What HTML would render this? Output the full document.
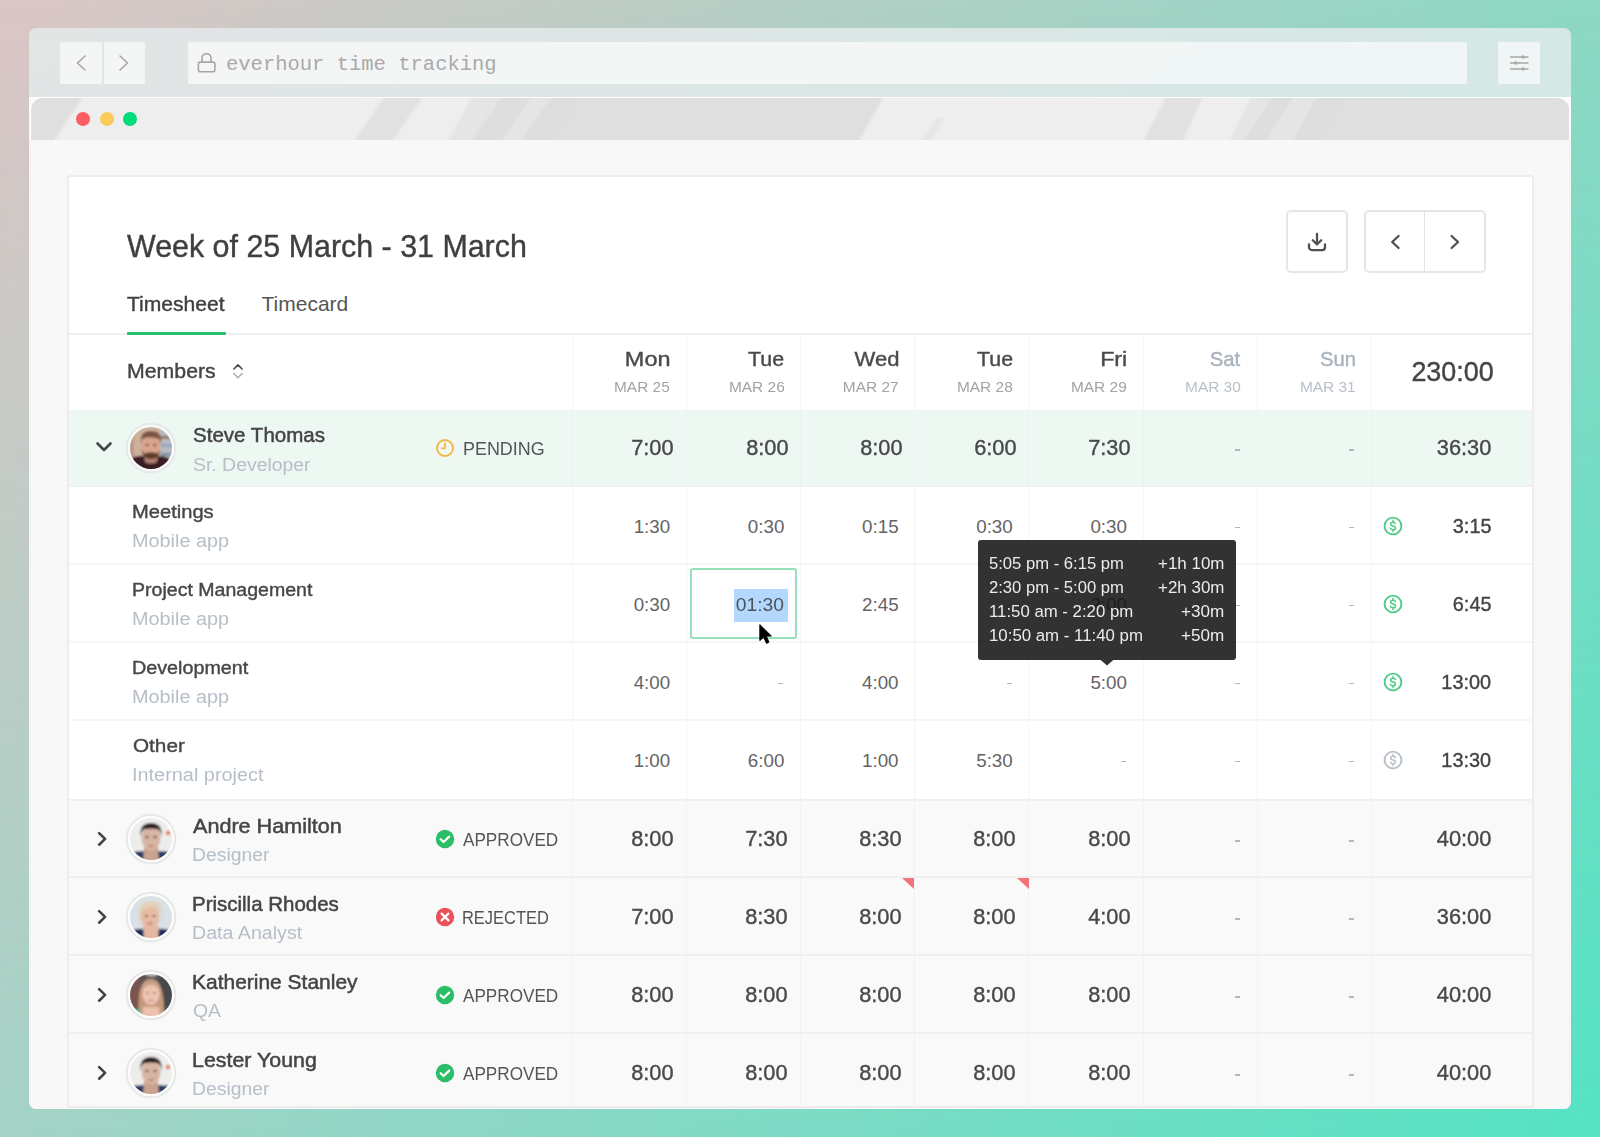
<!DOCTYPE html>
<html><head><meta charset="utf-8"><style>
html,body{margin:0;padding:0;}
body{width:1600px;height:1137px;position:relative;overflow:hidden;font-family:"Liberation Sans",sans-serif;
background:linear-gradient(to right,#dcc6c6,#8dd8c4);}
#bg2{position:absolute;left:0;top:0;width:1600px;height:1137px;background:linear-gradient(to right,#a4d2c6,#54e3c3);
-webkit-mask-image:linear-gradient(to bottom,transparent,#000);mask-image:linear-gradient(to bottom,transparent,#000);}
.t{position:absolute;line-height:1;white-space:nowrap;}
.abs{position:absolute;}
.md{-webkit-text-stroke:0.4px currentColor;}
.sb{-webkit-text-stroke:0.5px currentColor;}
#win{position:absolute;left:29px;top:28px;width:1542px;height:1081px;border-radius:7px;overflow:hidden;}
#inner{position:absolute;left:-29px;top:-28px;width:1600px;height:1137px;}
</style></head><body>
<div id="bg2"></div>
<div id="win"><div id="inner">

<div class="abs" style="left:29px;top:28px;width:1542px;height:69px;background:rgba(229,235,236,0.815);"></div>
<div class="abs" style="left:29px;top:97px;width:1542px;height:1012px;background:#f6f3f4;"></div>
<div class="abs" style="left:60px;top:42px;width:42px;height:42px;border-radius:2px;background:rgba(255,255,255,0.62);"></div>
<div class="abs" style="left:104px;top:42px;width:41px;height:42px;border-radius:2px;background:rgba(255,255,255,0.62);"></div>
<div class="abs" style="left:188px;top:42px;width:1279px;height:42px;border-radius:2px;background:rgba(255,255,255,0.62);"></div>
<div class="abs" style="left:1498px;top:42px;width:42px;height:42px;border-radius:2px;background:rgba(255,255,255,0.62);"></div>
<svg class="abs" style="left:0;top:0" width="1600" height="100"><g fill="none" stroke="#a6a6a6" stroke-width="1.6" stroke-linecap="round" stroke-linejoin="round"><path d="M85,56 L77.5,63 L85,70"/><path d="M120,56 L127.5,63 L120,70"/><rect x="198.4" y="62.1" width="16.5" height="9.6" rx="2"/><path d="M202,62.1 V58.1 a4.5,4.5 0 0 1 9,0 V62.1"/></g><path d="M1510.5,57 H1528 M1510.5,63 H1528 M1510.5,69 H1528" stroke="#a9a9a9" stroke-width="1.35" stroke-linecap="round"/><g fill="#a9a9a9"><circle cx="1523" cy="57" r="1.8"/><circle cx="1515.7" cy="63" r="1.8"/><circle cx="1523" cy="69" r="1.8"/></g></svg>
<div class="t" style="left:226px;top:53px;font-family:'Liberation Mono',monospace;font-size:20.5px;line-height:24px;color:#a9a9a9;">everhour time tracking</div>
<div class="abs" style="left:29px;top:97px;width:1542px;height:43px;background:#fdfcfc;"></div>
<div class="abs" style="left:31px;top:97.5px;width:1538px;height:42px;background:#eeeeee;overflow:hidden;border-radius:12px 12px 0 0;">
<svg width="1560" height="55" style="position:absolute;left:0;top:-6px;filter:blur(0.9px)"><polygon fill="#dfdfdf" points="-20.0,0.0 54.9,0.0 19.1,55.0 -20.0,55.0"/><polygon fill="#dfdfdf" points="560.5,0.0 855.3,0.0 824.7,55.0 519.5,55.0"/><polygon fill="#dfdfdf" points="1323.6,0.0 1560.0,0.0 1560.0,55.0 1290.4,55.0"/><polygon fill="#e1e1e1" points="357.2,0.0 395.2,0.0 356.8,55.0 318.8,55.0"/><polygon fill="#e1e1e1" points="1138.2,0.0 1173.7,0.0 1149.3,55.0 1108.8,55.0"/><polygon fill="#e5e5e5" points="443.2,0.0 560.5,0.0 519.5,55.0 413.8,55.0"/><polygon fill="#e5e5e5" points="1221.8,0.0 1323.6,0.0 1290.4,55.0 1196.2,55.0"/><polygon fill="#dedede" points="474.2,0.0 504.2,0.0 465.8,55.0 435.8,55.0"/><polygon fill="#dedede" points="524.2,0.0 560.5,0.0 519.5,55.0 485.8,55.0"/><polygon fill="#dedede" points="1243.8,0.0 1265.8,0.0 1231.2,55.0 1209.2,55.0"/><polygon fill="#dedede" points="1288.2,0.0 1323.6,0.0 1290.4,55.0 1258.8,55.0"/><polygon fill="#e6e6e6" points="906,26 914,26 899,49 891,49"/></svg>
</div>
<div class="abs" style="left:76px;top:112px;width:14px;height:14px;border-radius:50%;background:#fc5e64;"></div>
<div class="abs" style="left:99.5px;top:112px;width:14px;height:14px;border-radius:50%;background:#fcca58;"></div>
<div class="abs" style="left:122.5px;top:112px;width:14px;height:14px;border-radius:50%;background:#00dc7a;"></div>
<div class="abs" style="left:31px;top:140px;width:1538px;height:969px;background:#f8f8f8;"></div>
<div class="abs" style="left:67px;top:175px;width:1463px;height:928.5px;background:#fff;border:2px solid #ededed;border-radius:3px;"></div>
<div class="t md" style="left:127.05px;top:230.50px;font-size:31.3px;color:#3f3f3f;transform:scaleX(0.9713);transform-origin:left center;">Week of 25 March - 31 March</div>
<div class="t md" style="left:126.53px;top:293.22px;font-size:21px;color:#3f3f3f;transform:scaleX(1.0041);transform-origin:left center;">Timesheet</div>
<div class="t " style="left:261.53px;top:293.22px;font-size:21px;color:#555;">Timecard</div>
<div class="abs" style="left:69px;top:333px;width:1463px;height:2px;background:#f0f0f0;"></div>
<div class="abs" style="left:127px;top:332px;width:99px;height:3px;background:#26c26b;border-radius:1px;"></div>
<div class="abs" style="left:1285.5px;top:210px;width:62.5px;height:63px;box-sizing:border-box;border:2px solid #e6e6e6;border-radius:5px;background:#fff;"></div>
<div class="abs" style="left:1364px;top:210px;width:122px;height:63px;box-sizing:border-box;border:2px solid #e6e6e6;border-radius:5px;background:#fff;"></div>
<div class="abs" style="left:1423.8px;top:211px;width:1.6px;height:61px;background:#e4e4e4;"></div>
<svg class="abs" style="left:0;top:200px" width="1600" height="80"><g fill="none" stroke="#505050" stroke-width="2.3" stroke-linecap="round" stroke-linejoin="round"><path d="M1317,34 V44.5 M1312.8,40.3 L1317,44.5 L1321.2,40.3"/><path d="M1309,44.5 V47.3 a2.8,2.8 0 0 0 2.8,2.8 H1322.2 a2.8,2.8 0 0 0 2.8,-2.8 V44.5"/><path d="M1398.6,36 L1392.2,42 L1398.6,48"/><path d="M1451.6,36 L1458,42 L1451.6,48"/></g></svg>
<div class="t md" style="left:127.04px;top:360.69px;font-size:20.8px;color:#444;transform:scaleX(1.0233);transform-origin:left center;">Members</div>
<svg class="abs" style="left:228px;top:360px" width="20" height="22"><g fill="none" stroke-width="1.6" stroke-linecap="round" stroke-linejoin="round"><path d="M5.9,9 L10,4.9 L14.1,9" stroke="#4a4a4a"/><path d="M5.9,13.6 L10,17.7 L14.1,13.6" stroke="#a9b2bd"/></g></svg>
<div class="t md" style="right:929.13px;top:349.19px;font-size:20.8px;color:#4a4a4a;transform:scaleX(1.1271);transform-origin:right center;">Mon</div>
<div class="t " style="right:929.95px;top:379.64px;font-size:14.6px;color:#a3a3a3;transform:scaleX(1.0566);transform-origin:right center;">MAR 25</div>
<div class="t md" style="right:815.47px;top:349.19px;font-size:20.8px;color:#4a4a4a;transform:scaleX(1.0298);transform-origin:right center;">Tue</div>
<div class="t " style="right:815.71px;top:379.64px;font-size:14.6px;color:#a3a3a3;transform:scaleX(1.0574);transform-origin:right center;">MAR 26</div>
<div class="t md" style="right:700.81px;top:349.19px;font-size:20.8px;color:#4a4a4a;transform:scaleX(1.0592);transform-origin:right center;">Wed</div>
<div class="t " style="right:701.39px;top:379.64px;font-size:14.6px;color:#a3a3a3;transform:scaleX(1.0596);transform-origin:right center;">MAR 27</div>
<div class="t md" style="right:587.07px;top:349.19px;font-size:20.8px;color:#4a4a4a;transform:scaleX(1.0268);transform-origin:right center;">Tue</div>
<div class="t " style="right:587.31px;top:379.64px;font-size:14.6px;color:#a3a3a3;transform:scaleX(1.0574);transform-origin:right center;">MAR 28</div>
<div class="t md" style="right:472.27px;top:349.19px;font-size:20.8px;color:#4a4a4a;transform:scaleX(1.1151);transform-origin:right center;">Fri</div>
<div class="t " style="right:473.07px;top:379.64px;font-size:14.6px;color:#a3a3a3;transform:scaleX(1.0581);transform-origin:right center;">MAR 29</div>
<div class="t md" style="right:359.43px;top:349.19px;font-size:20.8px;color:#a9b2bd;transform:scaleX(0.9765);transform-origin:right center;">Sat</div>
<div class="t " style="right:358.99px;top:379.64px;font-size:14.6px;color:#b9c0c8;transform:scaleX(1.0559);transform-origin:right center;">MAR 30</div>
<div class="t md" style="right:244.10px;top:349.19px;font-size:20.8px;color:#a9b2bd;transform:scaleX(0.9731);transform-origin:right center;">Sun</div>
<div class="t " style="right:244.63px;top:379.64px;font-size:14.6px;color:#b9c0c8;transform:scaleX(1.0589);transform-origin:right center;">MAR 31</div>
<div class="t md" style="right:106.26px;top:359.04px;font-size:27px;color:#444;transform:scaleX(0.9951);transform-origin:right center;">230:00</div>
<div class="abs" style="left:69px;top:410px;width:1463px;height:76px;background:#eef8f2;"></div>
<div class="abs" style="left:69px;top:485px;width:1463px;height:1.5px;background:#eef2f0;"></div>
<div class="abs" style="left:69px;top:563px;width:1463px;height:2px;background:#f6f6f6;"></div>
<div class="abs" style="left:69px;top:641px;width:1463px;height:2px;background:#f6f6f6;"></div>
<div class="abs" style="left:69px;top:719px;width:1463px;height:2px;background:#f6f6f6;"></div>
<div class="abs" style="left:69px;top:800px;width:1463px;height:305.5px;background:#f9f9f9;border-radius:0 0 2px 2px;"></div>
<div class="abs" style="left:69px;top:799px;width:1463px;height:2px;background:#f0f0f0;"></div>
<div class="abs" style="left:69px;top:876px;width:1463px;height:2px;background:#f0f0f0;"></div>
<div class="abs" style="left:69px;top:954px;width:1463px;height:2px;background:#f0f0f0;"></div>
<div class="abs" style="left:69px;top:1032px;width:1463px;height:2px;background:#f0f0f0;"></div>
<div class="abs" style="left:571.5px;top:335px;width:0;height:770px;border-left:1px dotted #ececec;"></div>
<div class="abs" style="left:685.7px;top:335px;width:0;height:770px;border-left:1px dotted #ececec;"></div>
<div class="abs" style="left:799.9px;top:335px;width:0;height:770px;border-left:1px dotted #ececec;"></div>
<div class="abs" style="left:914.1px;top:335px;width:0;height:770px;border-left:1px dotted #ececec;"></div>
<div class="abs" style="left:1028.3px;top:335px;width:0;height:770px;border-left:1px dotted #ececec;"></div>
<div class="abs" style="left:1142.5px;top:335px;width:0;height:770px;border-left:1px dotted #ececec;"></div>
<div class="abs" style="left:1256.7px;top:335px;width:0;height:770px;border-left:1px dotted #ececec;"></div>
<div class="abs" style="left:1370.9px;top:335px;width:0;height:770px;border-left:1px dotted #ececec;"></div>
<svg class="abs" style="left:93.8px;top:437.0px;overflow:visible" width="20" height="20" viewBox="93.8 437.0 20 20"><path d="M97.3,443.5 L103.8,450 L110.3,443.5" fill="none" stroke="#444" stroke-width="2.6" stroke-linecap="round" stroke-linejoin="round"/></svg>
<svg class="abs" style="left:125.4px;top:421.7px" width="52" height="52" viewBox="-26 -26 52 52"><filter id="fc_steve_447" x="-20%" y="-20%" width="140%" height="140%"><feGaussianBlur stdDeviation="0.9"/></filter><circle r="24.3" fill="rgba(255,255,255,0.55)" stroke="#e7e9e8" stroke-width="2"/><clipPath id="c_steve_447"><circle r="21"/></clipPath><g clip-path="url(#c_steve_447)"><g filter="url(#fc_steve_447)"><rect x="-23" y="-23" width="46" height="46" fill="#cfb29c"/><rect x="9" y="-23" width="14" height="46" fill="#b9bcc0"/><rect x="10" y="-4" width="13" height="3" fill="#8fa6c2"/><rect x="10" y="5" width="13" height="3" fill="#7c8ea6"/><rect x="10" y="-12" width="13" height="2.5" fill="#8a6a5a"/><rect x="-23" y="-23" width="6" height="46" fill="#b89a88"/><path d="M-23,23 V12 Q-14,7 -8,8 L8,8 Q16,8 23,13 V23 Z" fill="#3a1c22"/><path d="M-7,8 Q0,13 7,8 L6,14 Q0,17 -6,14Z" fill="#b08070"/><ellipse cx="0" cy="-2" rx="9.5" ry="12" fill="#d9a48c"/><path d="M-10,-4 Q-12,-17 0,-17 Q12,-17 10,-4 Q9,-10 5,-10 Q-4,-12 -9,-9 Z" fill="#7b5343"/><path d="M-9.5,1 Q-9,11 0,11 Q9,11 9.5,1 Q8,6 5,5 Q0,3.5 -5,5 Q-8,6 -9.5,1Z" fill="#5e3a2c"/><ellipse cx="-3.8" cy="-3" rx="1.6" ry="0.9" fill="#5a3a30"/><ellipse cx="3.8" cy="-3" rx="1.6" ry="0.9" fill="#5a3a30"/></g></g></svg>
<div class="t sb" style="left:193.08px;top:424.99px;font-size:20.8px;color:#444;transform:scaleX(0.9873);transform-origin:left center;">Steve Thomas</div>
<div class="t " style="left:193.13px;top:456.12px;font-size:18.75px;color:#b6bec7;transform:scaleX(1.0351);transform-origin:left center;">Sr. Developer</div>
<svg class="abs" style="left:435.4px;top:437.6px" width="20" height="20"><circle cx="10" cy="10" r="8" fill="none" stroke="#f4b942" stroke-width="2"/><path d="M10,5.5 V10.3 H6.8" fill="none" stroke="#f4b942" stroke-width="1.8" stroke-linecap="round"/></svg>
<div class="t " style="left:463.12px;top:439.82px;font-size:18.75px;color:#555;transform:scaleX(0.9557);transform-origin:left center;">PENDING</div>
<div class="t md" style="right:926.05px;top:435.61px;font-size:22.9px;color:#484848;transform:scaleX(0.9506);transform-origin:right center;">7:00</div>
<div class="t md" style="right:811.85px;top:435.61px;font-size:22.9px;color:#484848;transform:scaleX(0.9506);transform-origin:right center;">8:00</div>
<div class="t md" style="right:697.65px;top:435.61px;font-size:22.9px;color:#484848;transform:scaleX(0.9506);transform-origin:right center;">8:00</div>
<div class="t md" style="right:583.45px;top:435.61px;font-size:22.9px;color:#484848;transform:scaleX(0.9506);transform-origin:right center;">6:00</div>
<div class="t md" style="right:469.25px;top:435.61px;font-size:22.9px;color:#484848;transform:scaleX(0.9506);transform-origin:right center;">7:30</div>
<div class="abs" style="left:1235.2px;top:449.2px;width:5px;height:1.6px;background:#b0b8c0;"></div>
<div class="abs" style="left:1349.4px;top:449.2px;width:5px;height:1.6px;background:#b0b8c0;"></div>
<div class="t md" style="right:108.58px;top:435.71px;font-size:22.9px;color:#484848;transform:scaleX(0.9516);transform-origin:right center;">36:30</div>
<div class="t md" style="left:132.14px;top:502.52px;font-size:18.75px;color:#474747;transform:scaleX(1.0734);transform-origin:left center;">Meetings</div>
<div class="t " style="left:132.16px;top:531.72px;font-size:18.75px;color:#b6bec7;transform:scaleX(1.0583);transform-origin:left center;">Mobile app</div>
<div class="t " style="right:929.87px;top:518.02px;font-size:18.75px;color:#646464;">1:30</div>
<div class="t " style="right:815.67px;top:518.02px;font-size:18.75px;color:#646464;">0:30</div>
<div class="t " style="right:701.42px;top:518.02px;font-size:18.75px;color:#646464;">0:15</div>
<div class="t " style="right:587.27px;top:518.02px;font-size:18.75px;color:#646464;">0:30</div>
<div class="t " style="right:473.07px;top:518.02px;font-size:18.75px;color:#646464;">0:30</div>
<div class="abs" style="left:1235.2px;top:526.5px;width:5px;height:1.6px;background:#b0b8c0;"></div>
<div class="abs" style="left:1349.4px;top:526.5px;width:5px;height:1.6px;background:#b0b8c0;"></div>
<svg class="abs" style="left:1381.7px;top:514.8px" width="22" height="22"><circle cx="11" cy="11" r="8.4" fill="none" stroke="#4dcb88" stroke-width="1.9"/><path d="M13.4,8.6 Q13,7.3 11,7.3 Q8.6,7.3 8.6,9.1 Q8.6,10.5 11,10.9 Q13.5,11.3 13.5,12.9 Q13.5,14.7 11,14.7 Q8.9,14.7 8.5,13.3 M11,5.6 V7.3 M11,14.7 V16.4" fill="none" stroke="#4dcb88" stroke-width="1.5" stroke-linecap="round"/></svg>
<div class="t md" style="right:108.58px;top:515.59px;font-size:20.8px;color:#444;transform:scaleX(0.9551);transform-origin:right center;">3:15</div>
<div class="t md" style="left:132.19px;top:580.52px;font-size:18.75px;color:#474747;transform:scaleX(1.0424);transform-origin:left center;">Project Management</div>
<div class="t " style="left:132.16px;top:609.72px;font-size:18.75px;color:#b6bec7;transform:scaleX(1.0583);transform-origin:left center;">Mobile app</div>
<div class="t " style="right:929.87px;top:596.02px;font-size:18.75px;color:#646464;">0:30</div>
<div class="t " style="right:701.42px;top:596.02px;font-size:18.75px;color:#646464;">2:45</div>
<div class="abs" style="left:1006.8px;top:604.5px;width:5px;height:1.6px;background:#b0b8c0;"></div>
<div class="t " style="right:473.07px;top:596.02px;font-size:18.75px;color:#646464;">2:00</div>
<div class="abs" style="left:1235.2px;top:604.5px;width:5px;height:1.6px;background:#b0b8c0;"></div>
<div class="abs" style="left:1349.4px;top:604.5px;width:5px;height:1.6px;background:#b0b8c0;"></div>
<svg class="abs" style="left:1381.7px;top:592.8px" width="22" height="22"><circle cx="11" cy="11" r="8.4" fill="none" stroke="#4dcb88" stroke-width="1.9"/><path d="M13.4,8.6 Q13,7.3 11,7.3 Q8.6,7.3 8.6,9.1 Q8.6,10.5 11,10.9 Q13.5,11.3 13.5,12.9 Q13.5,14.7 11,14.7 Q8.9,14.7 8.5,13.3 M11,5.6 V7.3 M11,14.7 V16.4" fill="none" stroke="#4dcb88" stroke-width="1.5" stroke-linecap="round"/></svg>
<div class="t md" style="right:108.58px;top:593.59px;font-size:20.8px;color:#444;transform:scaleX(0.9551);transform-origin:right center;">6:45</div>
<div class="t md" style="left:132.17px;top:658.52px;font-size:18.75px;color:#474747;transform:scaleX(1.0524);transform-origin:left center;">Development</div>
<div class="t " style="left:132.16px;top:687.72px;font-size:18.75px;color:#b6bec7;transform:scaleX(1.0583);transform-origin:left center;">Mobile app</div>
<div class="t " style="right:929.87px;top:674.02px;font-size:18.75px;color:#646464;">4:00</div>
<div class="abs" style="left:778.4px;top:682.5px;width:5px;height:1.6px;background:#b0b8c0;"></div>
<div class="t " style="right:701.47px;top:674.02px;font-size:18.75px;color:#646464;">4:00</div>
<div class="abs" style="left:1006.8px;top:682.5px;width:5px;height:1.6px;background:#b0b8c0;"></div>
<div class="t " style="right:473.07px;top:674.02px;font-size:18.75px;color:#646464;">5:00</div>
<div class="abs" style="left:1235.2px;top:682.5px;width:5px;height:1.6px;background:#b0b8c0;"></div>
<div class="abs" style="left:1349.4px;top:682.5px;width:5px;height:1.6px;background:#b0b8c0;"></div>
<svg class="abs" style="left:1381.7px;top:670.8px" width="22" height="22"><circle cx="11" cy="11" r="8.4" fill="none" stroke="#4dcb88" stroke-width="1.9"/><path d="M13.4,8.6 Q13,7.3 11,7.3 Q8.6,7.3 8.6,9.1 Q8.6,10.5 11,10.9 Q13.5,11.3 13.5,12.9 Q13.5,14.7 11,14.7 Q8.9,14.7 8.5,13.3 M11,5.6 V7.3 M11,14.7 V16.4" fill="none" stroke="#4dcb88" stroke-width="1.5" stroke-linecap="round"/></svg>
<div class="t md" style="right:108.65px;top:671.59px;font-size:20.8px;color:#444;transform:scaleX(0.9551);transform-origin:right center;">13:00</div>
<div class="t md" style="left:132.82px;top:736.52px;font-size:18.75px;color:#474747;transform:scaleX(1.1050);transform-origin:left center;">Other</div>
<div class="t " style="left:131.96px;top:765.72px;font-size:18.75px;color:#b6bec7;transform:scaleX(1.0609);transform-origin:left center;">Internal project</div>
<div class="t " style="right:929.87px;top:752.02px;font-size:18.75px;color:#646464;">1:00</div>
<div class="t " style="right:815.67px;top:752.02px;font-size:18.75px;color:#646464;">6:00</div>
<div class="t " style="right:701.47px;top:752.02px;font-size:18.75px;color:#646464;">1:00</div>
<div class="t " style="right:587.27px;top:752.02px;font-size:18.75px;color:#646464;">5:30</div>
<div class="abs" style="left:1121.0px;top:760.5px;width:5px;height:1.6px;background:#b0b8c0;"></div>
<div class="abs" style="left:1235.2px;top:760.5px;width:5px;height:1.6px;background:#b0b8c0;"></div>
<div class="abs" style="left:1349.4px;top:760.5px;width:5px;height:1.6px;background:#b0b8c0;"></div>
<svg class="abs" style="left:1381.7px;top:748.8px" width="22" height="22"><circle cx="11" cy="11" r="8.4" fill="none" stroke="#b9c0c8" stroke-width="1.9"/><path d="M13.4,8.6 Q13,7.3 11,7.3 Q8.6,7.3 8.6,9.1 Q8.6,10.5 11,10.9 Q13.5,11.3 13.5,12.9 Q13.5,14.7 11,14.7 Q8.9,14.7 8.5,13.3 M11,5.6 V7.3 M11,14.7 V16.4" fill="none" stroke="#b9c0c8" stroke-width="1.5" stroke-linecap="round"/></svg>
<div class="t md" style="right:108.65px;top:749.59px;font-size:20.8px;color:#444;transform:scaleX(0.9551);transform-origin:right center;">13:30</div>
<svg class="abs" style="left:92.3px;top:828.5px;overflow:visible" width="20" height="20" viewBox="92.3 828.5 20 20"><path d="M99.39999999999999,832.6 L105.39999999999999,838.4 L99.39999999999999,844.2" fill="none" stroke="#444" stroke-width="2.6" stroke-linecap="round" stroke-linejoin="round"/></svg>
<svg class="abs" style="left:124.7px;top:812.5px" width="52" height="52" viewBox="-26 -26 52 52"><filter id="fc_andre_838" x="-20%" y="-20%" width="140%" height="140%"><feGaussianBlur stdDeviation="0.9"/></filter><circle r="24.3" fill="rgba(255,255,255,0.55)" stroke="#e7e9e8" stroke-width="2"/><clipPath id="c_andre_838"><circle r="21"/></clipPath><g clip-path="url(#c_andre_838)"><g filter="url(#fc_andre_838)"><rect x="-23" y="-23" width="46" height="46" fill="#ededec"/><path d="M-23,23 V14 Q-14,12 -8,12 L8,12 Q15,12 23,14 V23 Z" fill="#2d3d68"/><path d="M-7,8 L7,8 L8,23 L-8,23Z" fill="#c9a290"/><ellipse cx="0" cy="-1" rx="9.5" ry="12.5" fill="#d8b4a2"/><path d="M-10.5,-2 Q-12,-16 0,-16 Q12,-16 10.5,-2 Q10,-9 6,-10 Q0,-11 -6,-10 Q-10,-9 -10.5,-2Z" fill="#2a2024"/><ellipse cx="-4" cy="-2" rx="1.7" ry="1" fill="#4a3028"/><ellipse cx="4" cy="-2" rx="1.7" ry="1" fill="#4a3028"/><ellipse cx="0" cy="7" rx="3" ry="0.9" fill="#b77a6a"/><circle cx="17" cy="-6" r="2.3" fill="#e7793a"/></g></g></svg>
<div class="t sb" style="left:193.45px;top:816.09px;font-size:20.8px;color:#444;transform:scaleX(1.0383);transform-origin:left center;">Andre Hamilton</div>
<div class="t " style="left:191.90px;top:846.42px;font-size:18.75px;color:#b6bec7;transform:scaleX(1.0312);transform-origin:left center;">Designer</div>
<svg class="abs" style="left:434.6px;top:828.5px" width="20" height="20"><circle cx="10" cy="10" r="9.2" fill="#2bbd68"/><path d="M5.6,10.2 L8.6,13 L14.2,7.6" fill="none" stroke="#fff" stroke-width="2.2" stroke-linecap="round" stroke-linejoin="round"/></svg>
<div class="t " style="left:462.86px;top:830.82px;font-size:18.75px;color:#555;transform:scaleX(0.9141);transform-origin:left center;">APPROVED</div>
<div class="t md" style="right:926.75px;top:826.61px;font-size:22.9px;color:#484848;transform:scaleX(0.9506);transform-origin:right center;">8:00</div>
<div class="t md" style="right:812.55px;top:826.61px;font-size:22.9px;color:#484848;transform:scaleX(0.9506);transform-origin:right center;">7:30</div>
<div class="t md" style="right:698.35px;top:826.61px;font-size:22.9px;color:#484848;transform:scaleX(0.9506);transform-origin:right center;">8:30</div>
<div class="t md" style="right:584.15px;top:826.61px;font-size:22.9px;color:#484848;transform:scaleX(0.9506);transform-origin:right center;">8:00</div>
<div class="t md" style="right:469.95px;top:826.61px;font-size:22.9px;color:#484848;transform:scaleX(0.9506);transform-origin:right center;">8:00</div>
<div class="abs" style="left:1235.2px;top:840.2px;width:5px;height:1.6px;background:#b0b8c0;"></div>
<div class="abs" style="left:1349.4px;top:840.2px;width:5px;height:1.6px;background:#b0b8c0;"></div>
<div class="t md" style="right:108.78px;top:826.61px;font-size:22.9px;color:#484848;transform:scaleX(0.9516);transform-origin:right center;">40:00</div>
<svg class="abs" style="left:92.3px;top:906.5px;overflow:visible" width="20" height="20" viewBox="92.3 906.5 20 20"><path d="M99.39999999999999,910.6 L105.39999999999999,916.4 L99.39999999999999,922.2" fill="none" stroke="#444" stroke-width="2.6" stroke-linecap="round" stroke-linejoin="round"/></svg>
<svg class="abs" style="left:124.7px;top:890.5px" width="52" height="52" viewBox="-26 -26 52 52"><filter id="fc_priscilla_916" x="-20%" y="-20%" width="140%" height="140%"><feGaussianBlur stdDeviation="0.9"/></filter><circle r="24.3" fill="rgba(255,255,255,0.55)" stroke="#e7e9e8" stroke-width="2"/><clipPath id="c_priscilla_916"><circle r="21"/></clipPath><g clip-path="url(#c_priscilla_916)"><g filter="url(#fc_priscilla_916)"><rect x="-23" y="-23" width="46" height="46" fill="#d9e1e6"/><path d="M-23,23 V15 Q-14,11 -8,12 L8,12 Q14,11 23,15 V23 Z" fill="#1b2f5c"/><path d="M-8,9 L8,9 L7,23 L-7,23Z" fill="#e4b8a0"/><ellipse cx="-1" cy="0" rx="9.5" ry="12" fill="#e5bba4"/><path d="M-12,3 Q-14,-17 0,-16 Q13,-16 12,4 Q10,-6 6,-9 Q-2,-12 -9,-6 Q-11,-2 -12,3Z" fill="#e2d2bc"/><ellipse cx="-4.5" cy="-1" rx="1.6" ry="0.9" fill="#7a5040"/><ellipse cx="3" cy="-1" rx="1.6" ry="0.9" fill="#7a5040"/><ellipse cx="-1" cy="6.5" rx="3.2" ry="1" fill="#c07a70"/></g></g></svg>
<div class="t sb" style="left:191.81px;top:894.09px;font-size:20.8px;color:#444;transform:scaleX(0.9844);transform-origin:left center;">Priscilla Rhodes</div>
<div class="t " style="left:191.88px;top:924.42px;font-size:18.75px;color:#b6bec7;transform:scaleX(1.0464);transform-origin:left center;">Data Analyst</div>
<svg class="abs" style="left:434.6px;top:906.5px" width="20" height="20"><circle cx="10" cy="10" r="9.2" fill="#ea525a"/><path d="M6.6,6.6 L13.4,13.4 M13.4,6.6 L6.6,13.4" fill="none" stroke="#fff" stroke-width="2.2" stroke-linecap="round"/></svg>
<div class="t " style="left:461.54px;top:908.82px;font-size:18.75px;color:#555;transform:scaleX(0.8765);transform-origin:left center;">REJECTED</div>
<div class="t md" style="right:926.75px;top:904.61px;font-size:22.9px;color:#484848;transform:scaleX(0.9506);transform-origin:right center;">7:00</div>
<div class="t md" style="right:812.55px;top:904.61px;font-size:22.9px;color:#484848;transform:scaleX(0.9506);transform-origin:right center;">8:30</div>
<div class="t md" style="right:698.35px;top:904.61px;font-size:22.9px;color:#484848;transform:scaleX(0.9506);transform-origin:right center;">8:00</div>
<div class="t md" style="right:584.15px;top:904.61px;font-size:22.9px;color:#484848;transform:scaleX(0.9506);transform-origin:right center;">8:00</div>
<div class="t md" style="right:469.95px;top:904.61px;font-size:22.9px;color:#484848;transform:scaleX(0.9506);transform-origin:right center;">4:00</div>
<div class="abs" style="left:1235.2px;top:918.2px;width:5px;height:1.6px;background:#b0b8c0;"></div>
<div class="abs" style="left:1349.4px;top:918.2px;width:5px;height:1.6px;background:#b0b8c0;"></div>
<div class="t md" style="right:108.78px;top:904.61px;font-size:22.9px;color:#484848;transform:scaleX(0.9516);transform-origin:right center;">36:00</div>
<svg class="abs" style="left:92.3px;top:984.5px;overflow:visible" width="20" height="20" viewBox="92.3 984.5 20 20"><path d="M99.39999999999999,988.6 L105.39999999999999,994.4 L99.39999999999999,1000.2" fill="none" stroke="#444" stroke-width="2.6" stroke-linecap="round" stroke-linejoin="round"/></svg>
<svg class="abs" style="left:124.7px;top:968.5px" width="52" height="52" viewBox="-26 -26 52 52"><filter id="fc_katherine_994" x="-20%" y="-20%" width="140%" height="140%"><feGaussianBlur stdDeviation="0.9"/></filter><circle r="24.3" fill="rgba(255,255,255,0.55)" stroke="#e7e9e8" stroke-width="2"/><clipPath id="c_katherine_994"><circle r="21"/></clipPath><g clip-path="url(#c_katherine_994)"><g filter="url(#fc_katherine_994)"><rect x="-23" y="-23" width="46" height="46" fill="#5a5352"/><rect x="-23" y="-23" width="12" height="46" fill="#7a5550"/><rect x="8" y="-23" width="15" height="46" fill="#4a4a4a"/><path d="M-8,-23 Q0,-14 10,-23Z" fill="#bdbdbd"/><path d="M-12,23 Q-15,-17 0,-16 Q14,-16 13,23 Z" fill="#c49a7c"/><path d="M-23,23 V17 Q-17,14 -12,14 L-8,23Z" fill="#33b09e"/><path d="M-8,12 L8,12 L9,23 L-9,23Z" fill="#ecc2ae"/><ellipse cx="0" cy="-1" rx="8.5" ry="11" fill="#efc5b2"/><path d="M-9,-4 Q-10,-14 0,-14 Q10,-14 9,-4 Q6,-10 0,-10 Q-6,-10 -9,-4Z" fill="#c8a085"/><ellipse cx="-3.5" cy="-2" rx="1.5" ry="0.8" fill="#7a5a50"/><ellipse cx="3.5" cy="-2" rx="1.5" ry="0.8" fill="#7a5a50"/><ellipse cx="0" cy="5.5" rx="3.2" ry="1.3" fill="#e09a98"/></g></g></svg>
<div class="t sb" style="left:191.77px;top:972.09px;font-size:20.8px;color:#444;transform:scaleX(1.0083);transform-origin:left center;">Katherine Stanley</div>
<div class="t " style="left:192.58px;top:1002.42px;font-size:18.75px;color:#b6bec7;transform:scaleX(1.0323);transform-origin:left center;">QA</div>
<svg class="abs" style="left:434.6px;top:984.5px" width="20" height="20"><circle cx="10" cy="10" r="9.2" fill="#2bbd68"/><path d="M5.6,10.2 L8.6,13 L14.2,7.6" fill="none" stroke="#fff" stroke-width="2.2" stroke-linecap="round" stroke-linejoin="round"/></svg>
<div class="t " style="left:462.86px;top:986.82px;font-size:18.75px;color:#555;transform:scaleX(0.9141);transform-origin:left center;">APPROVED</div>
<div class="t md" style="right:926.75px;top:982.61px;font-size:22.9px;color:#484848;transform:scaleX(0.9506);transform-origin:right center;">8:00</div>
<div class="t md" style="right:812.55px;top:982.61px;font-size:22.9px;color:#484848;transform:scaleX(0.9506);transform-origin:right center;">8:00</div>
<div class="t md" style="right:698.35px;top:982.61px;font-size:22.9px;color:#484848;transform:scaleX(0.9506);transform-origin:right center;">8:00</div>
<div class="t md" style="right:584.15px;top:982.61px;font-size:22.9px;color:#484848;transform:scaleX(0.9506);transform-origin:right center;">8:00</div>
<div class="t md" style="right:469.95px;top:982.61px;font-size:22.9px;color:#484848;transform:scaleX(0.9506);transform-origin:right center;">8:00</div>
<div class="abs" style="left:1235.2px;top:996.2px;width:5px;height:1.6px;background:#b0b8c0;"></div>
<div class="abs" style="left:1349.4px;top:996.2px;width:5px;height:1.6px;background:#b0b8c0;"></div>
<div class="t md" style="right:108.78px;top:982.61px;font-size:22.9px;color:#484848;transform:scaleX(0.9516);transform-origin:right center;">40:00</div>
<svg class="abs" style="left:92.3px;top:1062.5px;overflow:visible" width="20" height="20" viewBox="92.3 1062.5 20 20"><path d="M99.39999999999999,1066.6 L105.39999999999999,1072.4 L99.39999999999999,1078.2" fill="none" stroke="#444" stroke-width="2.6" stroke-linecap="round" stroke-linejoin="round"/></svg>
<svg class="abs" style="left:124.7px;top:1046.5px" width="52" height="52" viewBox="-26 -26 52 52"><filter id="fc_lester_1072" x="-20%" y="-20%" width="140%" height="140%"><feGaussianBlur stdDeviation="0.9"/></filter><circle r="24.3" fill="rgba(255,255,255,0.55)" stroke="#e7e9e8" stroke-width="2"/><clipPath id="c_lester_1072"><circle r="21"/></clipPath><g clip-path="url(#c_lester_1072)"><g filter="url(#fc_lester_1072)"><rect x="-23" y="-23" width="46" height="46" fill="#ededec"/><path d="M-23,23 V14 Q-14,12 -8,12 L8,12 Q15,12 23,14 V23 Z" fill="#2d3d68"/><path d="M-7,8 L7,8 L8,23 L-8,23Z" fill="#c9a290"/><ellipse cx="0" cy="-1" rx="9.5" ry="12.5" fill="#d8b4a2"/><path d="M-10.5,-2 Q-12,-16 0,-16 Q12,-16 10.5,-2 Q10,-9 6,-10 Q0,-11 -6,-10 Q-10,-9 -10.5,-2Z" fill="#2a2024"/><ellipse cx="-4" cy="-2" rx="1.7" ry="1" fill="#4a3028"/><ellipse cx="4" cy="-2" rx="1.7" ry="1" fill="#4a3028"/><ellipse cx="0" cy="7" rx="3" ry="0.9" fill="#b77a6a"/><circle cx="17" cy="-6" r="2.3" fill="#e7793a"/></g></g></svg>
<div class="t sb" style="left:191.74px;top:1050.09px;font-size:20.8px;color:#444;transform:scaleX(1.0278);transform-origin:left center;">Lester Young</div>
<div class="t " style="left:191.90px;top:1080.42px;font-size:18.75px;color:#b6bec7;transform:scaleX(1.0312);transform-origin:left center;">Designer</div>
<svg class="abs" style="left:434.6px;top:1062.5px" width="20" height="20"><circle cx="10" cy="10" r="9.2" fill="#2bbd68"/><path d="M5.6,10.2 L8.6,13 L14.2,7.6" fill="none" stroke="#fff" stroke-width="2.2" stroke-linecap="round" stroke-linejoin="round"/></svg>
<div class="t " style="left:462.86px;top:1064.82px;font-size:18.75px;color:#555;transform:scaleX(0.9141);transform-origin:left center;">APPROVED</div>
<div class="t md" style="right:926.75px;top:1060.61px;font-size:22.9px;color:#484848;transform:scaleX(0.9506);transform-origin:right center;">8:00</div>
<div class="t md" style="right:812.55px;top:1060.61px;font-size:22.9px;color:#484848;transform:scaleX(0.9506);transform-origin:right center;">8:00</div>
<div class="t md" style="right:698.35px;top:1060.61px;font-size:22.9px;color:#484848;transform:scaleX(0.9506);transform-origin:right center;">8:00</div>
<div class="t md" style="right:584.15px;top:1060.61px;font-size:22.9px;color:#484848;transform:scaleX(0.9506);transform-origin:right center;">8:00</div>
<div class="t md" style="right:469.95px;top:1060.61px;font-size:22.9px;color:#484848;transform:scaleX(0.9506);transform-origin:right center;">8:00</div>
<div class="abs" style="left:1235.2px;top:1074.2px;width:5px;height:1.6px;background:#b0b8c0;"></div>
<div class="abs" style="left:1349.4px;top:1074.2px;width:5px;height:1.6px;background:#b0b8c0;"></div>
<div class="t md" style="right:108.78px;top:1060.61px;font-size:22.9px;color:#484848;transform:scaleX(0.9516);transform-origin:right center;">40:00</div>
<svg class="abs" style="left:902.0px;top:878px" width="12" height="12"><polygon points="0,0 12,0 12,11" fill="#ef7379"/></svg>
<svg class="abs" style="left:1016.5px;top:878px" width="12" height="12"><polygon points="0,0 12,0 12,11" fill="#ef7379"/></svg>
<div class="abs" style="left:690px;top:567.5px;width:103px;height:67px;border:2px solid #94e0b8;border-radius:3px;background:#fff;"></div>
<div class="abs" style="left:734px;top:589px;width:54px;height:32.5px;background:#b3d7fd;"></div>
<div class="t " style="right:815.68px;top:595.72px;font-size:18.75px;color:#4a5560;transform:scaleX(1.0271);transform-origin:right center;">01:30</div>
<svg class="abs" style="left:755px;top:619px" width="22" height="28"><path d="M4.8,5.6 L4.8,21.6 L8.6,18.3 L11.5,24.4 L14,23.2 L11.4,17.2 L16.4,17 Z" fill="#000" stroke="#000" stroke-width="0.9" stroke-linejoin="round"/></svg>
<svg class="abs" style="left:977.5px;top:539.5px" width="259" height="127"><path d="M3,0 H255 a3,3 0 0 1 3,3 V117 a3,3 0 0 1 -3,3 H135.3 L129,125.5 L122.7,120 H3 a3,3 0 0 1 -3,-3 V3 a3,3 0 0 1 3,-3Z" fill="rgba(20,20,20,0.87)"/></svg>
<div class="t " style="left:989.43px;top:555.56px;font-size:16.7px;color:#ececec;transform:scaleX(0.9958);transform-origin:left center;">5:05 pm - 6:15 pm</div>
<div class="t " style="right:376.01px;top:555.56px;font-size:16.7px;color:#ececec;transform:scaleX(1.0144);transform-origin:right center;">+1h 10m</div>
<div class="t " style="left:989.27px;top:579.56px;font-size:16.7px;color:#ececec;transform:scaleX(0.9955);transform-origin:left center;">2:30 pm - 5:00 pm</div>
<div class="t " style="right:376.01px;top:579.56px;font-size:16.7px;color:#ececec;transform:scaleX(1.0144);transform-origin:right center;">+2h 30m</div>
<div class="t " style="left:988.84px;top:603.56px;font-size:16.7px;color:#ececec;transform:scaleX(1.0054);transform-origin:left center;">11:50 am - 2:20 pm</div>
<div class="t " style="right:376.00px;top:603.56px;font-size:16.7px;color:#ececec;transform:scaleX(1.0255);transform-origin:right center;">+30m</div>
<div class="t " style="left:988.84px;top:627.56px;font-size:16.7px;color:#ececec;transform:scaleX(1.0079);transform-origin:left center;">10:50 am - 11:40 pm</div>
<div class="t " style="right:376.00px;top:627.56px;font-size:16.7px;color:#ececec;transform:scaleX(1.0255);transform-origin:right center;">+50m</div>
</div></div></body></html>
